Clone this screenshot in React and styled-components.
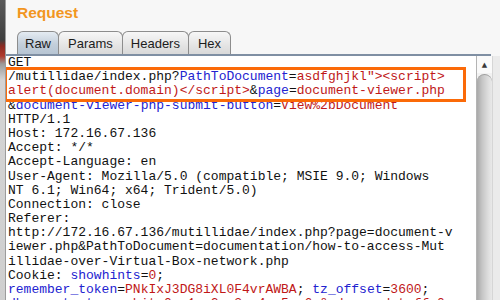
import React from "react";
import styled, { createGlobalStyle } from "styled-components";

const Global = createGlobalStyle`
  html, body { margin: 0; padding: 0; }
  body { background: #f7f7f7; width: 500px; height: 300px; overflow: hidden; }
`;

const Frame = styled.div`
  display: flex;
  width: 500px;
  height: 300px;
  overflow: hidden;
`;

const SideStrip = styled.div`
  width: 5px;
  flex: none;
  background: linear-gradient(
    to bottom,
    #5a5a5a 0px,
    #3f3f3f 40px,
    #8a2a22 46px,
    #b03a2c 56px,
    #9a9a9a 64px,
    #d4d4d4 80px,
    #cfcfcf 300px
  );
  border-right: 1px solid #9c9c9c;
`;

const Main = styled.div`
  flex: 1;
  display: flex;
  flex-direction: column;
  min-width: 0;
`;

const Title = styled.div`
  font-family: "Liberation Sans", Arial, sans-serif;
  font-weight: bold;
  font-size: 15.5px;
  color: #f2961f;
  height: 30px;
  line-height: 26px;
  padding-left: 11px;
`;

const TabBar = styled.div`
  display: flex;
  align-items: flex-end;
  padding-left: 11px;
  height: 24px;
  margin-right: 9px;
  border-bottom: 2px solid #7f8fa3;
  box-shadow: 0 1px 0 #c9d2dc;
`;

const Tab = styled.div`
  font-family: "Liberation Sans", Arial, sans-serif;
  font-size: 13px;
  color: #1c1c1c;
  height: 23px;
  line-height: 24px;
  padding: 0 ${(p) => p.$pad}px;
  box-sizing: border-box;
  border: 1px solid #8d8d8d;
  border-bottom: none;
  border-radius: 6px 6px 0 0;
  margin-right: -1px;
  background: ${(p) =>
    p.$active
      ? "linear-gradient(to bottom, #e4ebf2 0%, #c3cfdb 55%, #b7c5d3 100%)"
      : "linear-gradient(to bottom, #f7f7f7 0%, #e6e6e6 55%, #d9d9d9 100%)"};
`;

const EditorRow = styled.div`
  flex: 1;
  display: flex;
  min-height: 0;
  position: relative;
`;

const TextPane = styled.div`
  flex: 1;
  background: #ffffff;
  padding: 0 0 0 2px;
  font-family: "Liberation Mono", "Courier New", monospace;
  font-size: 13px;
  line-height: 14.2px;
  color: #111;
  white-space: pre;
  overflow: hidden;
  position: relative;
`;

const Line = styled.div`
  height: 14.2px;
`;

const Name = styled.span`
  color: #2222d0;
`;
const Value = styled.span`
  color: #c01818;
`;

const Highlight = styled.div`
  position: absolute;
  left: -2px;
  top: 11px;
  width: 456px;
  height: 29px;
  border: 3px solid #fb6a08;
  pointer-events: none;
`;

const Scrollbar = styled.div`
  width: 16px;
  flex: none;
  display: flex;
  flex-direction: column;
  background: #f2f2f2;
  border-left: 1px solid #b4b4b4;
  box-sizing: border-box;
`;

const ArrowButton = styled.div`
  height: 17px;
  display: flex;
  align-items: center;
  justify-content: center;
  background: #fafafa;
  color: #3a3a3a;
  font-size: 7px;
  font-family: "DejaVu Sans", sans-serif;
`;

const Thumb = styled.div`
  flex: 1;
  margin-top: 1px;
  border-radius: 8px 8px 0 0;
  background: linear-gradient(to right, #a9a9a9 0%, #c6c6c6 35%, #dedede 75%, #e9e9e9 100%);
  border-top: 1px solid #9e9e9e;
`;

const Gutter = styled.div`
  width: 8px;
  flex: none;
  background: #ebebeb;
  border-left: 1px solid #d6d6d6;
  box-sizing: border-box;
`;

const tabs = [
  { label: "Raw", pad: 7, active: true },
  { label: "Params", pad: 9 },
  { label: "Headers", pad: 8 },
  { label: "Hex", pad: 9 },
];

export default function App() {
  return (
    <>
      <Global />
      <Frame>
        <SideStrip />
        <Main>
          <Title>Request</Title>
          <TabBar>
            {tabs.map((t) => (
              <Tab key={t.label} $active={t.active} $pad={t.pad}>
                {t.label}
              </Tab>
            ))}
          </TabBar>
          <EditorRow>
            <TextPane>
              <Line>GET</Line>
              <Line>
                /mutillidae/index.php?<Name>PathToDocument</Name>=
                <Value>asdfghjkl"&gt;&lt;script&gt;</Value>
              </Line>
              <Line>
                <Value>alert(document.domain)&lt;/script&gt;</Value>&amp;
                <Name>page</Name>=<Value>document-viewer.php</Value>
              </Line>
              <Line>
                &amp;<Name>document-viewer-php-submit-button</Name>=
                <Value>View%2bDocument</Value>
              </Line>
              <Line>HTTP/1.1</Line>
              <Line>Host: 172.16.67.136</Line>
              <Line>Accept: */*</Line>
              <Line>Accept-Language: en</Line>
              <Line>User-Agent: Mozilla/5.0 (compatible; MSIE 9.0; Windows</Line>
              <Line>NT 6.1; Win64; x64; Trident/5.0)</Line>
              <Line>Connection: close</Line>
              <Line>Referer:</Line>
              <Line>http://172.16.67.136/mutillidae/index.php?page=document-v</Line>
              <Line>iewer.php&amp;PathToDocument=documentation/how-to-access-Mut</Line>
              <Line>illidae-over-Virtual-Box-network.php</Line>
              <Line>
                Cookie: <Name>showhints</Name>=<Value>0</Value>;
              </Line>
              <Line>
                <Name>remember_token</Name>=<Value>PNkIxJ3DG8iXL0F4vrAWBA</Value>;{" "}
                <Name>tz_offset</Name>=<Value>3600</Value>;
              </Line>
              <Line>
                <Name>dbx-postmeta</Name>=<Value>grabit=0-,1-,2-,3-,4-,5-,6-&amp;advancedstuff=0-</Value>
              </Line>
              <Highlight />
            </TextPane>
            <Scrollbar>
              <ArrowButton>▲</ArrowButton>
              <Thumb />
            </Scrollbar>
            <Gutter />
          </EditorRow>
        </Main>
      </Frame>
    </>
  );
}
